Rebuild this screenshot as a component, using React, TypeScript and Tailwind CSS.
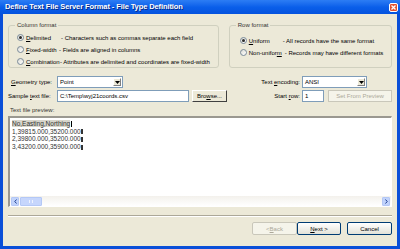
import React from "react";

const font = "font-['Liberation_Sans',Arial,sans-serif]";

function Radio({ checked }: { checked?: boolean }) {
  return (
    <span className="flex h-[7px] w-[7px] shrink-0 items-center justify-center rounded-full border border-[#7A8A99] bg-gradient-to-br from-[#DCDCD5] to-white">
      {checked && <span className="h-[3px] w-[3px] rounded-full bg-[#2A2A2A]" />}
    </span>
  );
}

function GroupBox({
  title,
  className,
  children,
}: {
  title: string;
  className?: string;
  children: React.ReactNode;
}) {
  return (
    <fieldset
      className={`rounded-[3px] border border-[#D0D0BF] px-[8px] ${className ?? ""}`}
    >
      <legend className="ml-[-2px] px-[2px] text-[#333]">{title}</legend>
      {children}
    </fieldset>
  );
}

function Combo({ value, className }: { value: string; className?: string }) {
  return (
    <div
      className={`flex h-[12px] items-center border border-[#7F9DB9] bg-white pl-[2px] ${className ?? ""}`}
    >
      <span className="flex-1">{value}</span>
      <span className="m-[1px] flex h-[8px] w-[8px] items-center justify-center border border-t-white border-l-white border-r-[#808080] border-b-[#808080] bg-[#ECE9D8]">
        <svg width="5" height="3" viewBox="0 0 5 3">
          <path d="M0 0h5L2.5 3z" fill="#000" />
        </svg>
      </span>
    </div>
  );
}

function Button({
  children,
  disabled,
  className,
}: {
  children: React.ReactNode;
  disabled?: boolean;
  className?: string;
}) {
  return (
    <div
      className={`flex items-center justify-center rounded-[2px] border ${
        disabled
          ? "border-[#C9C7BA] bg-[#F5F4EA] text-[#ACA899]"
          : "border-[#003C74] bg-gradient-to-b from-white to-[#E3E2D8] text-black"
      } ${className ?? ""}`}
    >
      {children}
    </div>
  );
}

export default function App() {
  return (
    <div
      className={`${font} flex h-[249px] w-[400px] flex-col whitespace-nowrap bg-[#0A4FD8] text-[6px] leading-none text-black`}
    >
      {/* Title bar */}
      <div className="flex h-[14px] items-center justify-between bg-gradient-to-b from-[#2C7DF4] via-[#0A5FEA] to-[#0553DE] pl-[5px] pr-[2px]">
        <span className="text-[7.5px] font-bold tracking-[-0.1px] text-white [text-shadow:1px_1px_0_#0A2A80]">
          Define Text File Server Format - File Type Definition
        </span>
        <div className="flex h-[9px] w-[9px] items-center justify-center rounded-[2px] border border-white bg-[#E1512F]">
          <svg width="5" height="5" viewBox="0 0 5 5">
            <path d="M0.5 0.5l4 4M4.5 0.5l-4 4" stroke="#fff" strokeWidth="1.3" />
          </svg>
        </div>
      </div>

      {/* Body */}
      <div className="mx-[3px] mb-[3px] flex flex-1 flex-col bg-[#ECE9D8] px-[5px]">
        {/* Format groups */}
        <div className="mt-[8px] flex gap-[10px]">
          <GroupBox title="Column format" className="h-[46px] w-[211px]">
            <div className="mt-[6px] flex flex-col gap-[5px]">
              <div className="flex items-center">
                <Radio checked />
                <span className="ml-[2px] w-[35px]">
                  <u>D</u>elimited
                </span>
                <span>- Characters such as commas separate each field</span>
              </div>
              <div className="flex items-center">
                <Radio />
                <span className="ml-[2px] w-[33px]">
                  <u>F</u>ixed-width
                </span>
                <span>- Fields are aligned in columns</span>
              </div>
              <div className="flex items-center">
                <Radio />
                <span className="ml-[2px] w-[34px]">
                  <u>C</u>ombination
                </span>
                <span>- Attributes are delimited and coordinates are fixed-width</span>
              </div>
            </div>
          </GroupBox>
          <GroupBox title="Row format" className="h-[46px] flex-1">
            <div className="mt-[9px] flex flex-col gap-[5px] pl-[2px]">
              <div className="flex items-center">
                <Radio checked />
                <span className="ml-[2px] w-[34px]">
                  <u>U</u>niform
                </span>
                <span>- All records have the same format</span>
              </div>
              <div className="flex items-center">
                <Radio />
                <span className="ml-[2px] w-[36px]">
                  Non-unifor<u>m</u>
                </span>
                <span>- Records may have different formats</span>
              </div>
            </div>
          </GroupBox>
        </div>

        {/* Options */}
        <div className="mt-[8px] flex justify-between">
          <div className="flex flex-col gap-[2px]">
            <div className="flex items-center">
              <span className="w-[49px] pl-[3px]">
                <u>G</u>eometry type:
              </span>
              <Combo value="Point" className="w-[66px]" />
            </div>
            <div className="flex items-center">
              <span className="w-[49px]">
                Sample <u>t</u>ext file:
              </span>
              <div className="flex h-[12px] w-[132px] items-center border border-[#7F9DB9] bg-white pl-[2px]">
                C:\Temp\wyj21coords.csv
              </div>
              <Button className="ml-[3px] h-[12px] w-[35px] rounded-none border-t-white border-l-white border-r-[#404040] border-b-[#404040] bg-none bg-[#ECE9D8]">
                Bro<u>w</u>se...
              </Button>
            </div>
          </div>
          <div className="flex flex-col items-end gap-[2px]">
            <div className="flex items-center pr-[25px]">
              <span className="mr-[2px]">
                Text <u>e</u>ncoding:
              </span>
              <Combo value="ANSI" className="w-[65px]" />
            </div>
            <div className="flex items-center">
              <span className="mr-[2px]">
                Start <u>r</u>ow:
              </span>
              <div className="flex h-[12px] w-[22px] items-center border border-[#7F9DB9] bg-white pl-[2px]">
                1
              </div>
              <Button disabled className="ml-[4px] h-[12px] w-[64px] rounded-none">
                Set From Preview
              </Button>
            </div>
          </div>
        </div>

        {/* Preview */}
        <div className="mt-[5px] pl-[2px] text-[#333]">Text file preview:</div>
        <div className="mt-[3px] flex h-[91px] flex-col border-t-2 border-l-2 border-b border-r border-t-[#9A9890] border-l-[#9A9890] border-b-white border-r-white bg-white">
          <div className="flex-1 pl-[2px] pt-[2px] text-[6.5px] leading-[7.6px] text-[#333]">
            <div>
              <span className="bg-[#D8D6CC]">No,Easting,Northing</span>
              <span className="ml-[1px] inline-block h-[6px] w-[1px] bg-black align-middle" />
            </div>
            {["1,39815.000,35200.000", "2,39800.000,35200.000", "3,43200.000,35900.000"].map(
              (l) => (
                <div key={l}>
                  {l}
                  <span className="inline-block h-[5px] w-[2px] border border-[#333] align-middle" />
                </div>
              )
            )}
          </div>
          {/* Horizontal scrollbar */}
          <div className="flex h-[10px] items-center bg-gradient-to-b from-[#F3F1EC] to-white px-[1px]">
            <div className="flex h-[9px] w-[8px] items-center justify-center rounded-[1px] border border-[#B4C8F6] bg-[#C1D3FB]">
              <svg width="3" height="5" viewBox="0 0 3 5">
                <path d="M2.5 0.5L0.8 2.5l1.7 2" stroke="#1D3F91" strokeWidth="1" fill="none" />
              </svg>
            </div>
            <div className="ml-[1px] flex h-[9px] w-[22px] items-center justify-center rounded-[1px] border border-[#B4C8F6] bg-[#C6D6FC]">
              <span className="h-[3px] w-[4px] border-x border-[#EEF3FF]" />
            </div>
            <div className="flex-1" />
            <div className="flex h-[9px] w-[8px] items-center justify-center rounded-[1px] border border-[#B4C8F6] bg-[#C1D3FB]">
              <svg width="3" height="5" viewBox="0 0 3 5">
                <path d="M0.5 0.5l1.7 2-1.7 2" stroke="#1D3F91" strokeWidth="1" fill="none" />
              </svg>
            </div>
          </div>
        </div>

        {/* Separator */}
        <div className="mt-[8px] h-[2px] border-t border-b border-t-[#ACA899] border-b-white" />

        {/* Buttons */}
        <div className="mt-[5px] flex justify-end">
          <Button disabled className="h-[13px] w-[45px]">
            &lt; <u>B</u>ack
          </Button>
          <Button className="h-[13px] w-[44px]">
            <u>N</u>ext &gt;
          </Button>
          <Button className="ml-[6px] h-[13px] w-[45px]">Cancel</Button>
        </div>
      </div>
    </div>
  );
}
